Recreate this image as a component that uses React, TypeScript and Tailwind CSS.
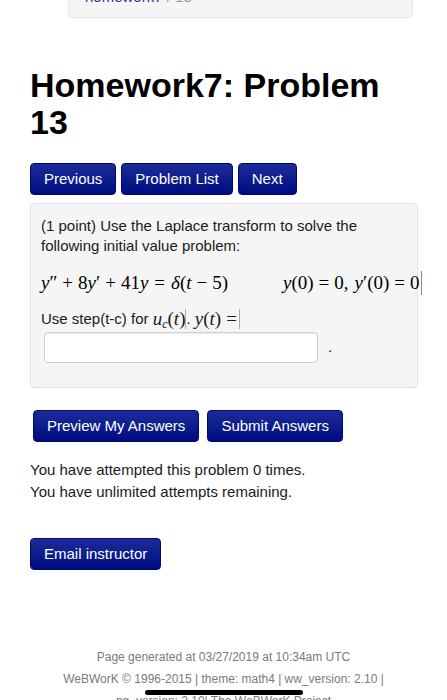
const btn =
  "rounded-[4px] border border-[#000a6e] bg-gradient-to-b from-[#1c2b98] to-[#000a80] text-white text-[15px] leading-[20px] h-[32px] px-[13px]";

function Var({ children }: { children: React.ReactNode }) {
  return <span className="italic">{children}</span>;
}

function Op({ children }: { children: React.ReactNode }) {
  return <span className="mx-[5px]">{children}</span>;
}

function Rel({ children }: { children: React.ReactNode }) {
  return <span className="mx-[6px]">{children}</span>;
}

export default function App() {
  return (
    <div className="relative min-h-[700px] overflow-hidden bg-white font-['Liberation_Sans',Arial,sans-serif] text-[#1a1a1a]">
      {/* breadcrumb */}
      <div className="ml-[68px] mr-[34px] mt-[-22px] h-[40px] rounded-b-[4px] border border-[#e6e6e6] bg-[#f5f5f5] px-[16px] pt-[8px] text-[15px] leading-[20px]">
        <span className="text-[#2a3d8f]">homework7</span>
        <span className="text-[#999]"> / 13</span>
      </div>

      <div className="px-[30px]">
        <h1 className="mt-[49px] text-[34px] font-bold leading-[37px] text-black">
          Homework7: Problem 13
        </h1>

        <div className="mt-[22px] flex gap-[5px]">
          <button className={btn}>Previous</button>
          <button className={btn}>Problem List</button>
          <button className={btn}>Next</button>
        </div>

        <div className="mt-[8px] h-[185px] w-[388px] rounded-[4px] border border-[#e3e3e3] bg-[#f5f5f5] px-[10px] pt-[12px] text-[15px] leading-[20px]">
          <p>
            (1 point) Use the Laplace transform to solve the following initial
            value problem:
          </p>

          <div className="mt-[15px] flex whitespace-nowrap font-['Liberation_Serif','Times_New_Roman',serif] text-[19px] leading-[24px] text-black">
            <span className="w-[242px] shrink-0">
              <Var>y</Var>″<Op>+</Op>8<Var>y</Var>′<Op>+</Op>41<Var>y</Var>
              <Rel>=</Rel>
              <Var>δ</Var>(<Var>t</Var>
              <Op>−</Op>5)
            </span>
            <span className="flex shrink-0 items-center">
              <Var>y</Var>(0)<span className="mx-[5px]">=</span>0,
              <span className="ml-[6px]" />
              <Var>y</Var>′(0)<span className="mx-[5px]">=</span>0
              <span className="ml-[1px] inline-block h-[24px] w-[1px] bg-[#888]" />
            </span>
          </div>

          <div className="mt-[14px] flex items-center whitespace-nowrap">
            <span>Use step(t-c) for&nbsp;</span>
            <span className="font-['Liberation_Serif','Times_New_Roman',serif] text-[19px]">
              <Var>u</Var>
              <sub className="text-[12px] italic">c</sub>(<Var>t</Var>)
            </span>
            <span className="inline-block h-[20px] w-[1px] bg-[#aaa]" />
            <span>.&nbsp;</span>
            <span className="font-['Liberation_Serif','Times_New_Roman',serif] text-[19px]">
              <Var>y</Var>(<Var>t</Var>)<span className="ml-[5px]">=</span>
            </span>
            <span className="ml-[2px] inline-block h-[20px] w-[1px] bg-[#aaa]" />
          </div>

          <div className="mt-[3px] flex items-end">
            <input
              type="text"
              className="ml-[3px] h-[31px] w-[274px] rounded-[4px] border border-[#cfcfcf] bg-white shadow-[inset_0_1px_1px_rgba(0,0,0,0.08)]"
            />
            <span className="ml-[10px] pb-[6px]">.</span>
          </div>
        </div>

        <div className="ml-[3px] mt-[22px] flex gap-[8px]">
          <button className={btn}>Preview My Answers</button>
          <button className={btn}>Submit Answers</button>
        </div>

        <div className="mt-[17px] text-[15px] leading-[22px]">
          <p>You have attempted this problem 0 times.</p>
          <p>You have unlimited attempts remaining.</p>
        </div>

        <div className="mt-[35px]">
          <button className={btn}>Email instructor</button>
        </div>

        <div className="mt-[76px] text-center text-[12px] leading-[22px] text-[#7a7a7a]">
          <p>Page generated at 03/27/2019 at 10:34am UTC</p>
          <p>WeBWorK © 1996-2015 | theme: math4 | ww_version: 2.10 |</p>
          <p>pg_version: 2.10| The WeBWorK Project</p>
        </div>
      </div>

      {/* home indicator */}
      <div className="absolute left-[145px] top-[690px] h-[5px] w-[158px] rounded-full bg-black" />
    </div>
  );
}
